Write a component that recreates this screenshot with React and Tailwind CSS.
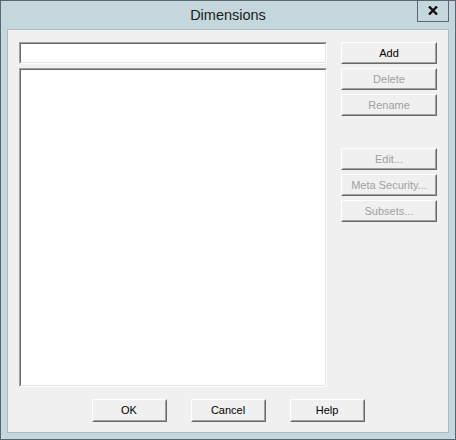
import React from "react";

const font = { fontFamily: '"Liberation Sans", Arial, sans-serif' };

// classic raised 3D push button
function Button({ label, disabled, className = "" }) {
  return (
    <div
      className={
        "border border-t-white border-l-white border-b-[#696969] border-r-[#696969] bg-[#f0f0f0] " +
        className
      }
    >
      <div className="h-full border border-t-[#f0f0f0] border-l-[#f0f0f0] border-b-[#a0a0a0] border-r-[#a0a0a0] flex items-center justify-center">
        <span
          className={
            "text-[11px] leading-none " +
            (disabled ? "text-[#a0a0a0]" : "text-black")
          }
        >
          {label}
        </span>
      </div>
    </div>
  );
}

// classic sunken field
function Sunken({ className = "" }) {
  return (
    <div
      className={
        "border border-t-[#a0a0a0] border-l-[#a0a0a0] border-b-white border-r-white " +
        className
      }
    >
      <div className="h-full border border-t-[#696969] border-l-[#696969] border-b-[#e3e3e3] border-r-[#e3e3e3] bg-white"></div>
    </div>
  );
}

export default function App() {
  return (
    <div
      className="w-[456px] h-[440px] border border-[#5b6672] bg-[#c4d7dc] flex flex-col"
      style={font}
    >
      <div className="relative h-[28px] flex items-center justify-center">
        <span className="text-[14.5px] text-[#1b1b1b] mt-[1px]">Dimensions</span>
        <div className="absolute right-[6px] top-[-1px] w-[32px] h-[22px] border border-t-0 border-[#5b6672] flex items-center justify-center">
          <svg width="10" height="9" viewBox="0 0 10 9">
            <path d="M1 0.5 L9 8.5 M9 0.5 L1 8.5" stroke="#111" strokeWidth="2.4" />
          </svg>
        </div>
      </div>
      <div className="flex-1 mx-[6px] mb-[6px] border border-[#a9bcc3] bg-[#f0f0f0] px-[11px] pt-[12px] pb-[10px] flex flex-col">
        <div className="flex flex-1 gap-[14px]">
          <div className="w-[308px] flex flex-col gap-[4px]">
            <Sunken className="h-[22px]" />
            <Sunken className="flex-1" />
          </div>
          <div className="w-[96px] flex flex-col">
            <Button label="Add" className="h-[22px]" />
            <Button label="Delete" disabled className="h-[22px] mt-[4px]" />
            <Button label="Rename" disabled className="h-[22px] mt-[4px]" />
            <Button label="Edit..." disabled className="h-[22px] mt-[32px]" />
            <Button label="Meta Security..." disabled className="h-[22px] mt-[4px]" />
            <Button label="Subsets..." disabled className="h-[22px] mt-[4px]" />
          </div>
        </div>
        <div className="flex justify-center gap-[24px] mt-[12px]">
          <Button label="OK" className="w-[75px] h-[23px]" />
          <Button label="Cancel" className="w-[75px] h-[23px]" />
          <Button label="Help" className="w-[75px] h-[23px]" />
        </div>
      </div>
    </div>
  );
}
